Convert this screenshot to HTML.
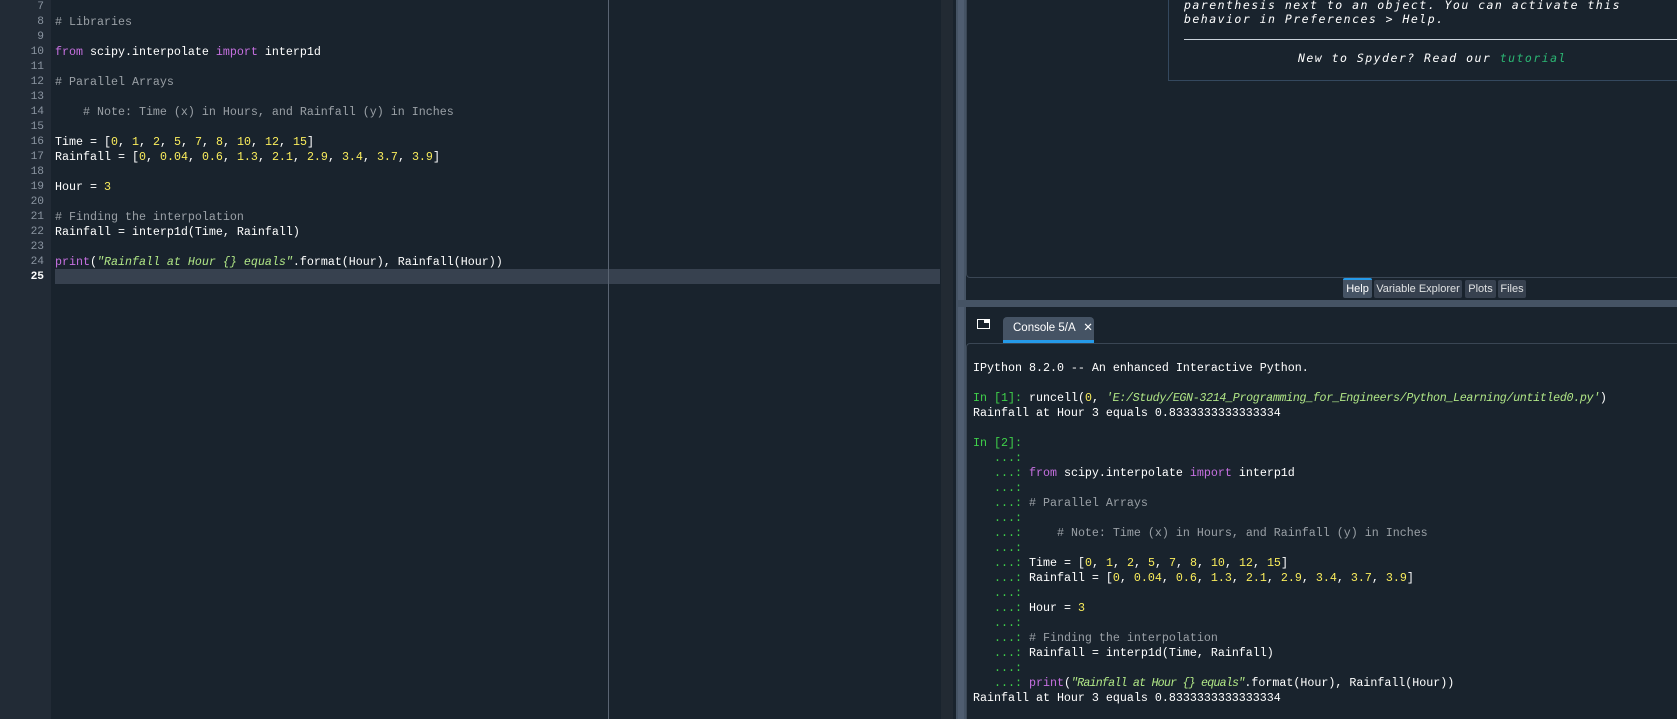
<!DOCTYPE html>
<html><head><meta charset="utf-8"><style>
*{margin:0;padding:0;box-sizing:border-box}
body{width:1677px;height:719px;background:#19232d;position:relative;overflow:hidden;font-family:"Liberation Mono",monospace;font-size:11.67px;color:#fff}
pre{font-family:"Liberation Mono",monospace;font-size:11.67px;line-height:15px;position:absolute;white-space:pre}
.c{color:#9aa0a6}.k{color:#c670e0}.n{color:#faed5c}.s{color:#b0e686;font-style:italic}.g{color:#3fd14a}
.abs{position:absolute}
</style></head><body>
<div class="abs" style="left:0;top:0;width:51px;height:719px;background:#222b36"></div>
<div class="abs" style="left:55px;top:269px;width:885px;height:15px;background:#37414f"></div>
<div class="abs" style="left:608px;top:0;width:1px;height:719px;background:#5a6472"></div>
<pre style="left:0;top:0px;width:44px;text-align:right;color:#8b95a1;font-size:11.2px">7
8
9
10
11
12
13
14
15
16
17
18
19
20
21
22
23
24
<b style="color:#fff">25</b></pre>
<pre style="left:55px;top:0px"><span class="c"></span>
<span class="c"># Libraries</span>

<span class="k">from</span> scipy.interpolate <span class="k">import</span> interp1d

<span class="c"># Parallel Arrays</span>

    <span class="c"># Note: Time (x) in Hours, and Rainfall (y) in Inches</span>

Time = [<span class="n">0</span>, <span class="n">1</span>, <span class="n">2</span>, <span class="n">5</span>, <span class="n">7</span>, <span class="n">8</span>, <span class="n">10</span>, <span class="n">12</span>, <span class="n">15</span>]
Rainfall = [<span class="n">0</span>, <span class="n">0.04</span>, <span class="n">0.6</span>, <span class="n">1.3</span>, <span class="n">2.1</span>, <span class="n">2.9</span>, <span class="n">3.4</span>, <span class="n">3.7</span>, <span class="n">3.9</span>]

Hour = <span class="n">3</span>

<span class="c"># Finding the interpolation</span>
Rainfall = interp1d(Time, Rainfall)

<span class="k">print</span>(<span class="s">"Rainfall at Hour {} equals"</span>.format(Hour), Rainfall(Hour))</pre>
<div class="abs" style="left:941px;top:0;width:12px;height:719px;background:#222a33"></div>
<div class="abs" style="left:956px;top:0;width:10px;height:719px;background:#455364"></div>
<div class="abs" style="left:958px;top:0;width:6px;height:719px;background:#4f5d70"></div>
<div class="abs" style="left:966px;top:0;width:711px;height:278px;background:#19232d;border-left:1px solid #3a4654;border-bottom:1px solid #3a4654;border-radius:0 0 0 4px"></div>
<div class="abs" style="left:1168px;top:0;width:509px;height:81px;border-left:1px solid #34485e;border-bottom:1px solid #34485e"></div>
<pre style="left:1184px;top:-2px;font-family:'DejaVu Sans Mono',monospace;font-style:italic;font-size:11.5px;letter-spacing:1.48px;line-height:14px;color:#fff">parenthesis next to an object. You can activate this
behavior in Preferences &gt; Help.</pre>
<div class="abs" style="left:1184px;top:39px;width:493px;height:1px;background:#c9d1d9"></div>
<pre style="left:1298px;top:51px;font-family:'DejaVu Sans Mono',monospace;font-style:italic;font-size:11.5px;letter-spacing:1.48px;color:#fff">New to Spyder? Read our <span style="color:#2bb673">tutorial</span></pre>
<div class="abs" style="left:966px;top:278px;width:711px;height:22px;background:#19232d"></div>
<div class="abs" style="left:1343px;top:278px;width:29px;height:20px;background:#455364;border-top:2px solid #259ae9;border-radius:2px;font:11px 'Liberation Sans Narrow','Liberation Sans',sans-serif;color:#fff;text-align:center;line-height:18px">Help</div>
<div class="abs" style="left:1374px;top:280px;width:88px;height:18px;background:#37414f;border-radius:2px;font:11px 'Liberation Sans Narrow','Liberation Sans',sans-serif;color:#dfe1e2;text-align:center;line-height:18px">Variable Explorer</div>
<div class="abs" style="left:1465px;top:280px;width:31px;height:18px;background:#37414f;border-radius:2px;font:11px 'Liberation Sans Narrow','Liberation Sans',sans-serif;color:#dfe1e2;text-align:center;line-height:18px">Plots</div>
<div class="abs" style="left:1498px;top:280px;width:28px;height:18px;background:#37414f;border-radius:2px;font:11px 'Liberation Sans Narrow','Liberation Sans',sans-serif;color:#dfe1e2;text-align:center;line-height:18px">Files</div>
<div class="abs" style="left:956px;top:300px;width:721px;height:7px;background:#455364"></div>
<div class="abs" style="left:966px;top:307px;width:711px;height:36px;background:#19232d"></div>
<div class="abs" style="left:977px;top:319px;width:13px;height:10px;border:1.5px solid #fff"></div>
<div class="abs" style="left:984px;top:319px;width:6px;height:4px;background:#fff"></div>
<div class="abs" style="left:1003px;top:317px;width:91px;height:26px;background:#455364;border-radius:4px 4px 0 0;border-bottom:3px solid #259ae9;font:11.5px 'Liberation Sans Narrow','Liberation Sans',sans-serif;color:#fff;line-height:23px;padding-left:10px">Console 5/A <span style="margin-left:5px">✕</span></div>
<div class="abs" style="left:966px;top:343px;width:711px;height:376px;border-left:1px solid #3a4654;border-top:1px solid #3a4654;border-radius:4px 0 0 0"></div>
<pre style="left:973px;top:361px">IPython 8.2.0 -- An enhanced Interactive Python.

<span class="g">In [</span><span class="g">1</span><span class="g">]:</span> runcell(<span class="n">0</span>, <span class="s" style="letter-spacing:-0.32px">'E:/Study/EGN-3214_Programming_for_Engineers/Python_Learning/untitled0.py'</span>)
Rainfall at Hour 3 equals 0.8333333333333334

<span class="g">In [2]:</span>
<span class="g">   ...:</span>
<span class="g">   ...:</span> <span class="k">from</span> scipy.interpolate <span class="k">import</span> interp1d
<span class="g">   ...:</span>
<span class="g">   ...:</span> <span class="c"># Parallel Arrays</span>
<span class="g">   ...:</span>
<span class="g">   ...:</span>     <span class="c"># Note: Time (x) in Hours, and Rainfall (y) in Inches</span>
<span class="g">   ...:</span>
<span class="g">   ...:</span> Time = [<span class="n">0</span>, <span class="n">1</span>, <span class="n">2</span>, <span class="n">5</span>, <span class="n">7</span>, <span class="n">8</span>, <span class="n">10</span>, <span class="n">12</span>, <span class="n">15</span>]
<span class="g">   ...:</span> Rainfall = [<span class="n">0</span>, <span class="n">0.04</span>, <span class="n">0.6</span>, <span class="n">1.3</span>, <span class="n">2.1</span>, <span class="n">2.9</span>, <span class="n">3.4</span>, <span class="n">3.7</span>, <span class="n">3.9</span>]
<span class="g">   ...:</span>
<span class="g">   ...:</span> Hour = <span class="n">3</span>
<span class="g">   ...:</span>
<span class="g">   ...:</span> <span class="c"># Finding the interpolation</span>
<span class="g">   ...:</span> Rainfall = interp1d(Time, Rainfall)
<span class="g">   ...:</span>
<span class="g">   ...:</span> <span class="k">print</span>(<span class="s" style="letter-spacing:-0.8px">"Rainfall at Hour {} equals"</span>.format(Hour), Rainfall(Hour))
Rainfall at Hour 3 equals 0.8333333333333334</pre>
</body></html>
